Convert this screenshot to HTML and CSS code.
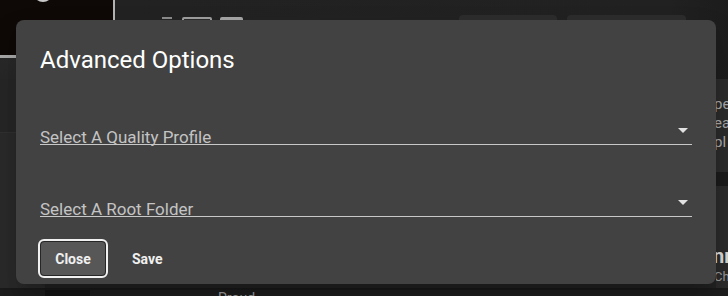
FILE: index.html
```html
<!DOCTYPE html>
<html lang="en">
<head>
<meta charset="utf-8">
<title>Advanced Options</title>
<link rel="stylesheet" href="styles.css">
</head>
<body>
<div class="page">
  <div class="top">
    <div class="poster-col">
      <div class="poster"><span class="poster-dot"></span></div>
    </div>
    <div class="toolbar">
      <span class="tb-x"></span>
      <span class="tb-box"></span>
      <span class="tb-fill"></span>
      <span class="tb-btn tb-btn1"></span>
      <span class="tb-btn tb-btn2"></span>
    </div>
  </div>
  <div class="middle">
    <div class="left-col">
      <div class="left-a"></div>
      <div class="left-b"></div>
    </div>
    <div class="center"></div>
    <div class="right-col">
      <div class="rc-text">pe<br>ear<br>pl</div>
      <div class="rc-band"></div>
      <div class="rc-title">nr</div>
      <div class="rc-sub">Ch</div>
    </div>
  </div>
  <div class="bottom">
    <span class="bottom-block"></span>
    <span class="bottom-text">Proud</span>
  </div>
</div>

<div class="dialog" role="dialog" aria-labelledby="dlg-title">
  <h2 class="dialog-title" id="dlg-title">Advanced Options</h2>
  <div class="field field-first">
    <span class="field-label">Select A Quality Profile</span>
    <svg class="field-arrow" width="10" height="5" viewBox="0 0 10 5"><path d="M0 0L5 5L10 0Z" fill="#e2e2e2"/></svg>
  </div>
  <div class="field field-second">
    <span class="field-label">Select A Root Folder</span>
    <svg class="field-arrow" width="10" height="5" viewBox="0 0 10 5"><path d="M0 0L5 5L10 0Z" fill="#e2e2e2"/></svg>
  </div>
  <div class="actions">
    <button class="btn btn-close" type="button">Close</button>
    <button class="btn btn-save" type="button">Save</button>
  </div>
</div>
</body>
</html>
```

FILE: styles.css
```css
html, body {
  margin: 0;
  padding: 0;
  width: 728px;
  height: 296px;
  overflow: hidden;
  background: #212121;
  font-family: Roboto, "Liberation Sans", sans-serif;
}

.page {
  width: 728px;
  height: 296px;
  display: flex;
  flex-direction: column;
  overflow: hidden;
}

/* ---------- header behind the dialog ---------- */
.top {
  height: 79px;
  display: flex;
  flex-shrink: 0;
}

.poster-col {
  width: 115px;
  background: linear-gradient(#2d2d2d, #272727);
}

.poster {
  position: relative;
  width: 113px;
  height: 55px;
  background: #0e0906;
  border-right: 2px solid #b3b3b3;
  border-bottom: 3px solid #a8a8a8;
  overflow: hidden;
}

.poster-dot {
  position: absolute;
  left: 33px;
  top: -18px;
  width: 20px;
  height: 20px;
  border-radius: 50%;
  background: #c9c9c9;
}

.toolbar {
  flex: 1;
  display: flex;
  align-items: flex-start;
  background: linear-gradient(90deg, #222 0%, #212121 90%, #1c1c1c 100%);
}

.tb-x {
  margin: 17px 0 0 47px;
  width: 10px;
  height: 6px;
  border-top: 2px solid #8a8a8a;
  box-sizing: border-box;
}

.tb-box {
  margin: 17px 0 0 10px;
  width: 30px;
  height: 12px;
  box-sizing: border-box;
  border: 2px solid #9d9d9d;
  border-radius: 2px;
  background: #2a2a2a;
}

.tb-fill {
  margin: 17px 0 0 8px;
  width: 23px;
  height: 12px;
  border-radius: 2px;
  background: #a4a4a4;
}

.tb-btn {
  margin-top: 15px;
  height: 40px;
  border-radius: 4px;
  background: #2c2c2c;
}

.tb-btn1 {
  margin-left: 216px;
  width: 98px;
}

.tb-btn2 {
  margin-left: 10px;
  width: 119px;
}

/* ---------- middle behind the dialog ---------- */
.middle {
  height: 209px;
  display: flex;
  flex-shrink: 0;
}

.left-col {
  width: 45px;
  display: flex;
  flex-direction: column;
}

.left-a {
  height: 53px;
  background: #262626;
  border-bottom: 1px solid #303030;
}

.left-b {
  flex: 1;
  background: #2a2a2a;
}

.center {
  flex: 1;
  background: #232323;
}

.right-col {
  width: 12px;
  background: #2b2b2b;
  overflow: hidden;
  padding-top: 16px;
  box-sizing: border-box;
}

.rc-text {
  margin-left: -2px;
  font-size: 15px;
  line-height: 19px;
  color: #a9a9a9;
  white-space: nowrap;
}

.rc-band {
  margin-top: 20px;
  height: 14px;
  background: #1b1b1b;
}

.rc-title {
  margin-top: 58px;
  margin-left: -3px;
  font-size: 20px;
  font-weight: 700;
  line-height: 24px;
  color: #d8d8d8;
  white-space: nowrap;
}

.rc-sub {
  margin-left: -2px;
  font-size: 13px;
  line-height: 18px;
  color: #9a9a9a;
  white-space: nowrap;
}

/* ---------- bottom strip ---------- */
.bottom {
  flex: 1;
  display: flex;
  background: #1e1e1e;
  border-top: 2px solid #1a1a1a;
  overflow: hidden;
}

.bottom-block {
  margin-left: 45px;
  width: 45px;
  background: #141414;
}

.bottom-text {
  margin-left: 128px;
  padding-top: 3px;
  font-size: 14px;
  line-height: 10px;
  color: #a0a0a0;
}

/* ---------- dialog ---------- */
.dialog {
  position: absolute;
  left: 16px;
  top: 20px;
  width: 700px;
  height: 264px;
  box-sizing: border-box;
  padding: 24px 24px 0;
  background: #424242;
  border-radius: 8px;
  box-shadow: 0 11px 15px -7px rgba(0, 0, 0, 0.2), 0 24px 38px 3px rgba(0, 0, 0, 0.14);
}

.dialog-title {
  margin: 0;
  font-size: 24px;
  font-weight: 400;
  line-height: 32px;
  color: #ffffff;
}

.field {
  display: flex;
  justify-content: space-between;
  align-items: flex-start;
  border-bottom: 1px solid #c8c8c8;
}

.field-first {
  margin-top: 54px;
}

.field-second {
  margin-top: 57px;
}

.field-label {
  font-size: 17px;
  line-height: 14px;
  color: #c4c4c4;
  white-space: nowrap;
}

.field-arrow {
  display: block;
  margin: -2px 4px 0 0;
}

.actions {
  display: flex;
  align-items: center;
  margin-top: 24px;
}

.btn {
  font-family: Roboto, "Liberation Sans", sans-serif;
  font-size: 14px;
  font-weight: 700;
  color: #f0f0f0;
  background: none;
  border: 0;
  height: 35px;
  padding: 0 16px;
  cursor: pointer;
}

.btn-close {
  width: 66px;
  padding: 0;
  background: #575757;
  border: 1px solid #262626;
  border-radius: 4px;
  outline: 2px solid #f0f0f0;
  outline-offset: 0;
}

.btn-save {
  margin-left: 10px;
}
```
